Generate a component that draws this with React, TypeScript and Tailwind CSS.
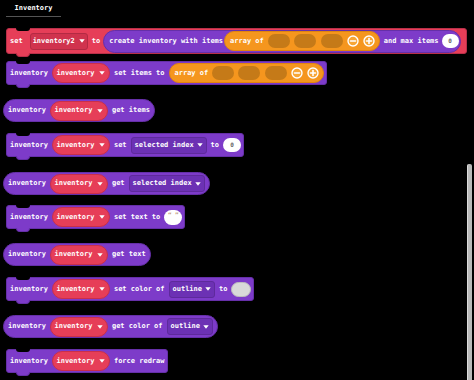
import React from "react";

const font = { fontFamily: '"DejaVu Sans Mono", "Liberation Mono", monospace' };

function Arrow() {
  return (
    <svg width="6" height="4" viewBox="0 0 6 4" className="shrink-0">
      <path d="M0.3 0.3h5.4L3 3.8z" fill="white" />
    </svg>
  );
}

function VarPill() {
  return (
    <div className="flex h-[20px] w-[58px] shrink-0 items-center justify-center gap-[5px] rounded-full border border-[#c92f4a] bg-[#e63e58]">
      <span>inventory</span>
      <Arrow />
    </div>
  );
}

function PurpleDrop({ label }: { label: string }) {
  return (
    <div className="flex h-[17px] shrink-0 items-center gap-[3px] rounded-[3px] border border-[#5e2a9c] bg-[#6c31b4] px-[3px]">
      <span>{label}</span>
      <Arrow />
    </div>
  );
}

function Oval({ className, children }: { className: string; children?: React.ReactNode }) {
  return (
    <div className={"flex shrink-0 items-center justify-center rounded-full " + className}>{children}</div>
  );
}

function Circle({ plus }: { plus?: boolean }) {
  return (
    <svg width="12" height="12" viewBox="0 0 12 12" className="shrink-0">
      <circle cx="6" cy="6" r="5" fill="#f7a636" stroke="white" strokeWidth="1.4" />
      <path d="M3.5 6h5" stroke="white" strokeWidth="1.6" strokeLinecap="round" />
      {plus && <path d="M6 3.5v5" stroke="white" strokeWidth="1.6" strokeLinecap="round" />}
    </svg>
  );
}

function ArrayOf() {
  return (
    <div className="flex h-[20px] shrink-0 items-center rounded-full border border-[#e0860f] bg-[#f5961e] pl-[5px] pr-[4px]">
      <span>array of</span>
      <div className="ml-[4px] h-[14px] w-[22px] rounded-full bg-[#c57a18]" />
      <div className="ml-[4px] h-[14px] w-[22px] rounded-full bg-[#c57a18]" />
      <div className="ml-[5px] h-[14px] w-[22px] rounded-full bg-[#c57a18]" />
      <div className="ml-[4px]">
        <Circle />
      </div>
      <div className="ml-[4px]">
        <Circle plus />
      </div>
    </div>
  );
}

function Notches({ bg, border }: { bg: string; border: string }) {
  return (
    <>
      <div className="absolute left-[9px] top-[-1px] h-[3px] w-[14px] rounded-b-[4px] bg-black" />
      <div className={"absolute bottom-[-4px] left-[9px] h-[4px] w-[14px] rounded-b-[4px] border-b border-l border-r " + bg + " " + border} />
    </>
  );
}

function Stmt({ className, children }: { className: string; children: React.ReactNode }) {
  return (
    <div
      className={
        "relative ml-[6px] flex h-[24px] items-center gap-[4px] self-start rounded-[3px] border border-[#652fa8] bg-[#7d3bc9] pl-[3px] pr-[2px] " +
        className
      }
    >
      <Notches bg="bg-[#7d3bc9]" border="border-[#652fa8]" />
      {children}
    </div>
  );
}

function Rep({ className, children }: { className: string; children: React.ReactNode }) {
  return (
    <div
      className={
        "ml-[3px] flex h-[23px] items-center gap-[4px] self-start rounded-full border border-[#652fa8] bg-[#7d3bc9] pl-[4px] pr-[4px] " +
        className
      }
    >
      {children}
    </div>
  );
}

export default function App() {
  return (
    <div
      className="relative h-[380px] w-[474px] overflow-hidden whitespace-nowrap bg-black text-[7px] font-bold leading-none text-white"
      style={font}
    >
      <div className="ml-[6px] flex h-[17px] w-[55px] items-center justify-center border-b border-[#555555] pt-[1px]">
        <span>Inventory</span>
      </div>

      <div className="flex flex-col">
        {/* Block 1 */}
        <div className="relative ml-[6px] mt-[11px] flex h-[26px] w-[461px] items-center self-start rounded-[3px] border border-[#b92f49] bg-[#e63e58] pl-[3px] pr-[6px]">
          <Notches bg="bg-[#e63e58]" border="border-[#b92f49]" />
          <span>set</span>
          <div className="ml-[7px] flex h-[17px] shrink-0 items-center gap-[4px] rounded-[3px] border border-[#b32a43] bg-[#d0334e] px-[2px]">
            <span>inventory2</span>
            <Arrow />
          </div>
          <span className="ml-[4px]">to</span>
          <div className="ml-[3px] flex h-[23px] flex-1 items-center rounded-full border border-[#652fa8] bg-[#7d3bc9] pl-[5px] pr-[1px]">
            <span>create inventory with items</span>
            <div className="ml-[1px]">
              <ArrayOf />
            </div>
            <span className="ml-[4px]">and max items</span>
            <div className="flex-1" />
            <Oval className="ml-[3px] h-[14px] w-[17px] bg-white text-[6px] text-[#666]">0</Oval>
          </div>
        </div>

        {/* Block 2 */}
        <Stmt className="mt-[7px]">
          <span>inventory</span>
          <VarPill />
          <span>set items to</span>
          <ArrayOf />
        </Stmt>

        {/* Block 3 */}
        <Rep className="mt-[14px]">
          <span>inventory</span>
          <VarPill />
          <span>get items</span>
        </Rep>

        {/* Block 4 */}
        <Stmt className="mt-[11px]">
          <span>inventory</span>
          <VarPill />
          <span>set</span>
          <PurpleDrop label="selected index" />
          <span>to</span>
          <Oval className="h-[14px] w-[18px] bg-white text-[6px] text-[#666]">0</Oval>
        </Stmt>

        {/* Block 5 */}
        <Rep className="mt-[15px]">
          <span>inventory</span>
          <VarPill />
          <span>get</span>
          <PurpleDrop label="selected index" />
        </Rep>

        {/* Block 6 */}
        <Stmt className="mt-[10px]">
          <span>inventory</span>
          <VarPill />
          <span>set text to</span>
          <Oval className="h-[15px] w-[18px] items-start bg-white pt-[2px] text-[6px] text-[#b8906a]">“ ”</Oval>
        </Stmt>

        {/* Block 7 */}
        <Rep className="mt-[14px]">
          <span>inventory</span>
          <VarPill />
          <span>get text</span>
        </Rep>

        {/* Block 8 */}
        <Stmt className="mt-[11px]">
          <span>inventory</span>
          <VarPill />
          <span>set color of</span>
          <PurpleDrop label="outline" />
          <span>to</span>
          <Oval className="h-[15px] w-[20px] border border-[#bdbdbd] bg-[#d9d9d9]" />
        </Stmt>

        {/* Block 9 */}
        <Rep className="mt-[14px]">
          <span>inventory</span>
          <VarPill />
          <span>get color of</span>
          <PurpleDrop label="outline" />
        </Rep>

        {/* Block 10 */}
        <Stmt className="mt-[11px]">
          <span>inventory</span>
          <VarPill />
          <span>force redraw</span>
        </Stmt>
      </div>

      {/* scrollbar */}
      <div className="absolute bottom-0 right-[2px] top-[164px] w-[5px] rounded-t-[2px] border-l border-[#dcdcdc] bg-[#b9b9b9]" />
    </div>
  );
}
